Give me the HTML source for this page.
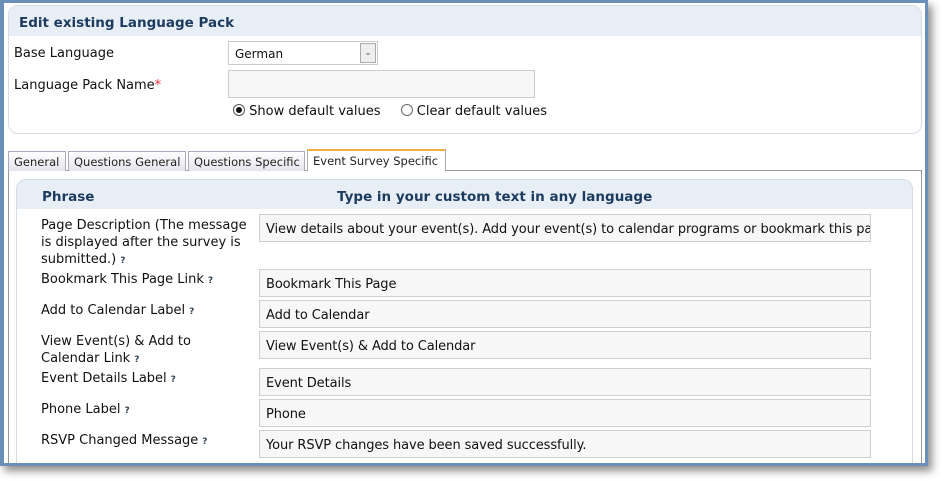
<!DOCTYPE html>
<html><head><style>
*{box-sizing:border-box;margin:0;padding:0}
body{width:942px;height:481px;background:#fff;font-family:"DejaVu Sans",Verdana,sans-serif;font-size:13px;color:#111;position:relative;overflow:hidden}
.frame{position:absolute;left:0;top:0;width:928px;height:466px;border:3px solid #6a8fb9;border-left-width:4px;box-shadow:4px 5px 8px rgba(0,0,0,.45);background:#fff;overflow:hidden}
.clip{position:absolute;left:0;top:0;width:928px;height:463px;overflow:hidden}
.abs{position:absolute}
.panel{position:absolute;left:8px;top:5px;width:914px;height:129px;border:1px solid #d5dce4;border-radius:10px;overflow:hidden}
.ph{height:30px;background:#e7eef6;font-weight:bold;font-size:13.5px;color:#1d3b5e;padding:9px 10px}
.inp{position:absolute;background:#f7f7f7;border:1px solid #cfcfcf;height:28px;padding:7px 6px 5px;white-space:nowrap;overflow:hidden;letter-spacing:-0.1px}
.tab{position:absolute;top:151px;height:20px;border:1px solid #aab;border-bottom:none;background:linear-gradient(#fff,#e4e4ee);font-size:11.5px;padding:3px 5px 1px;color:#222;white-space:nowrap;overflow:hidden}
.q{font-size:9px;font-weight:bold;color:#345;margin-left:4px}
.lbl{position:absolute;left:41px;line-height:17px;white-space:nowrap}
</style></head><body>
<div class="frame"></div>
<div class="clip">
<div class="panel"><div class="ph">Edit existing Language Pack</div></div>
<div class="abs" style="left:14px;top:46px">Base Language</div>
<div class="abs" style="left:228px;top:41px;width:150px;height:24px;border:1px solid #ccc;padding:5px 6px 3px;font-size:12px">German
 <div class="abs" style="right:1px;top:1px;width:16px;height:20px;border:1px solid #aaa;background:#eee;font-size:9px;text-align:center;line-height:18px;color:#555">&#8964;</div></div>
<div class="abs" style="left:14px;top:78px">Language Pack Name<span style="color:#e33">*</span></div>
<div class="abs" style="left:228px;top:70px;width:307px;height:28px;border:1px solid #ccc;background:#f7f7f7"></div>
<div class="abs" style="left:233px;top:104px;white-space:nowrap">
<span style="display:inline-block;width:12px;height:12px;border:1px solid #555;border-radius:50%;vertical-align:-1px;position:relative"><span style="position:absolute;left:2px;top:2px;width:6px;height:6px;border-radius:50%;background:#111"></span></span> Show default values
<span style="display:inline-block;width:12px;height:12px;border:1px solid #666;border-radius:50%;vertical-align:-1px;margin-left:16px"></span> Clear default values</div>
<div class="abs" style="left:8px;top:170px;width:914px;height:300px;border:1px solid #999"></div>
<div class="tab" style="left:8px;width:58px">General</div>
<div class="tab" style="left:68px;width:118px">Questions General</div>
<div class="tab" style="left:188px;width:117px">Questions Specific</div>
<div class="tab" style="left:307px;width:139px;height:22px;top:149px;background:#fff;border-color:#aaa;border-top:2px solid #f0b040;padding-top:3px">Event Survey Specific</div>
<div class="abs" style="left:16px;top:179px;width:897px;height:300px;border:1px solid #d5dce4;border-radius:10px;overflow:hidden">
 <div style="height:29px;background:#e7eef6;font-weight:bold;font-size:13.5px;color:#1d3b5e;position:relative">
  <span class="abs" style="left:25px;top:9px">Phrase</span><span class="abs" style="left:320px;top:9px">Type in your custom text in any language</span></div></div>
<div class="lbl" style="top:217px">Page Description (The message<br>is displayed after the survey is<br>submitted.)<span class="q">?</span></div>
<div class="lbl" style="top:271px">Bookmark This Page Link<span class="q">?</span></div>
<div class="lbl" style="top:302px">Add to Calendar Label<span class="q">?</span></div>
<div class="lbl" style="top:333px">View Event(s) &amp; Add to<br>Calendar Link<span class="q">?</span></div>
<div class="lbl" style="top:370px">Event Details Label<span class="q">?</span></div>
<div class="lbl" style="top:401px">Phone Label<span class="q">?</span></div>
<div class="lbl" style="top:432px">RSVP Changed Message<span class="q">?</span></div>
<div class="inp" style="left:259px;top:214px;width:612px">View details about your event(s). Add your event(s) to calendar programs or bookmark this page</div>
<div class="inp" style="left:259px;top:269px;width:612px">Bookmark This Page</div>
<div class="inp" style="left:259px;top:300px;width:612px">Add to Calendar</div>
<div class="inp" style="left:259px;top:331px;width:612px">View Event(s) &amp; Add to Calendar</div>
<div class="inp" style="left:259px;top:368px;width:612px">Event Details</div>
<div class="inp" style="left:259px;top:399px;width:612px">Phone</div>
<div class="inp" style="left:259px;top:430px;width:612px">Your RSVP changes have been saved successfully.</div>
</div>
</body></html>
